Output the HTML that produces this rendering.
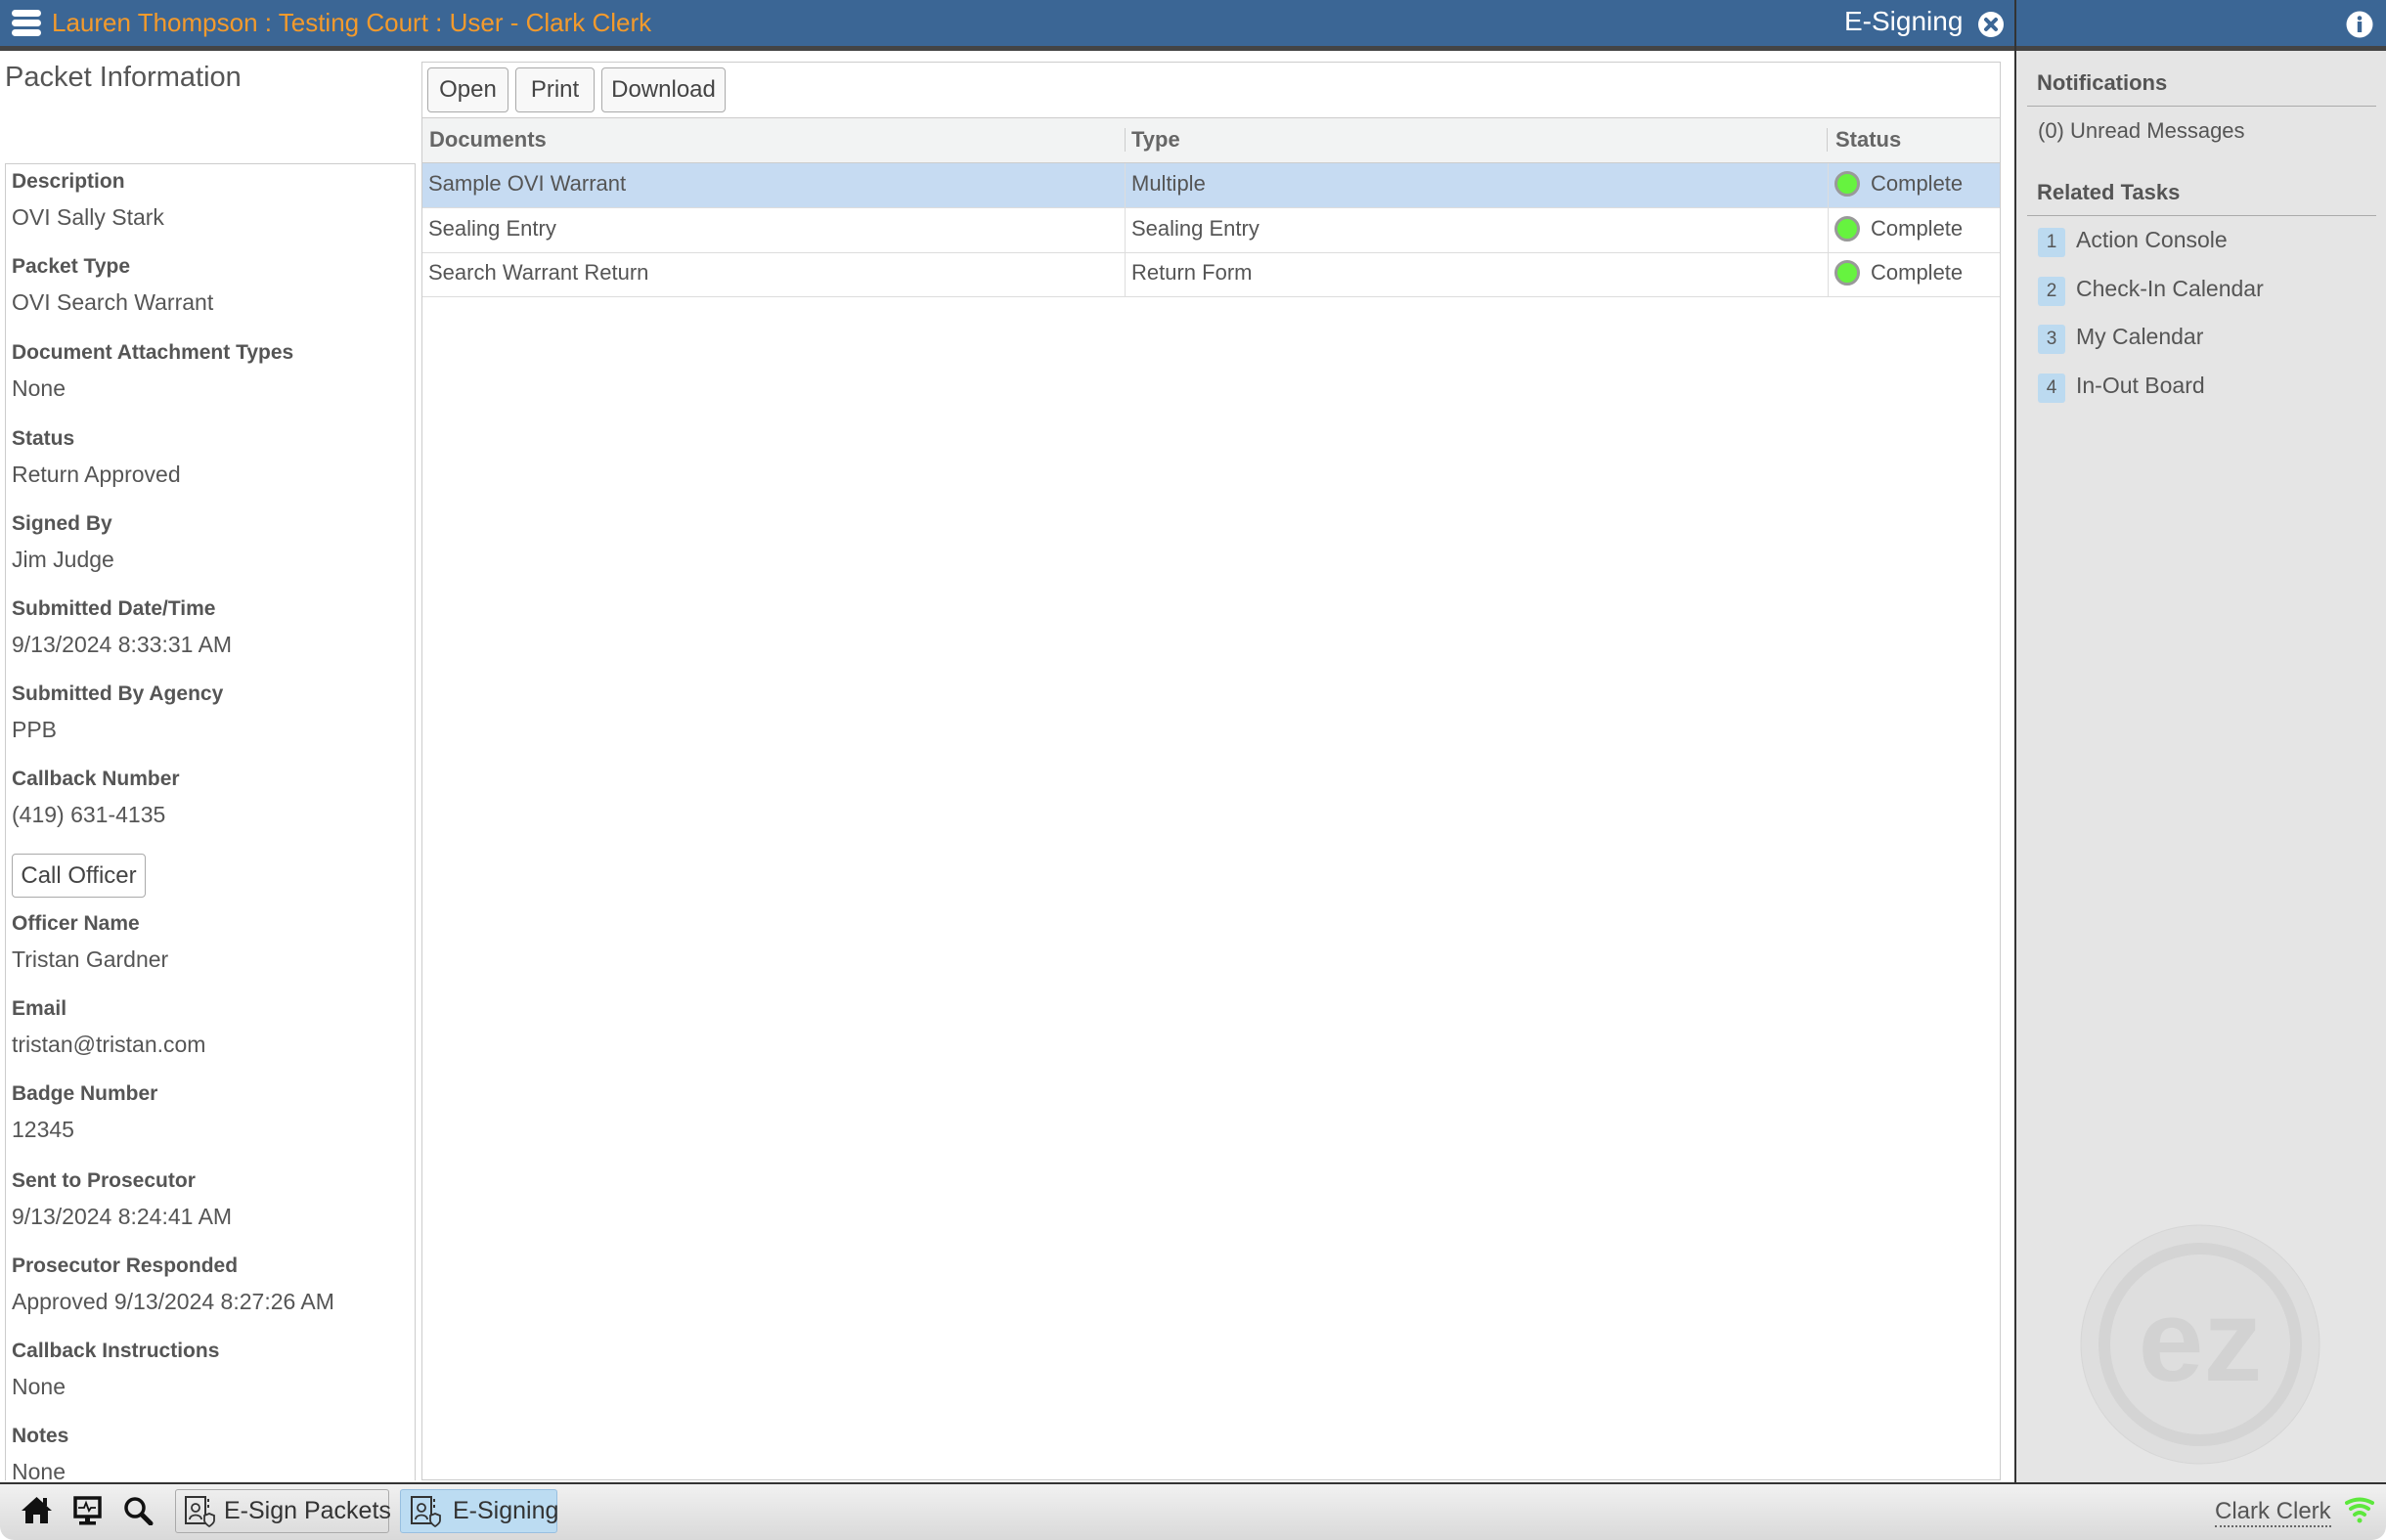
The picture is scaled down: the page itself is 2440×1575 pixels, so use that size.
<!DOCTYPE html>
<html><head><meta charset="utf-8">
<style>
*{box-sizing:border-box;margin:0;padding:0}
body{width:2440px;height:1575px;overflow:hidden;background:#fff;font-family:"Liberation Sans",sans-serif;color:#555;position:relative}
.a{position:absolute;white-space:nowrap}
#top{left:0;top:0;width:2440px;height:47px;background:#3b6695}
#topline{left:0;top:47px;width:2440px;height:5px;background:#444}
.lbl{font-weight:bold;font-size:21px;color:#555;left:12px}
.val{font-size:23px;color:#555;left:12px}
.btn{border:1px solid #aaa;border-radius:4px;background:#f8f8f8;font-size:24px;color:#444;text-align:center}
.row{left:432px;width:1613px;height:46px;border-bottom:1px solid #ddd}
.cell{font-size:22px;color:#555}
.dot{width:26px;height:26px;border-radius:50%;background:#66f33f;border:3px solid #999}
.badge{left:2084px;width:28px;height:30px;background:#bcdaf0;border-radius:3px;font-size:19px;text-align:center;line-height:30px;color:#555}
.task{left:2123px;font-size:23px;color:#555}
</style></head><body>
<div class="a" id="top"></div>
<div class="a" id="topline"></div>
<div class="a" style="left:12px;top:10px;width:30px;height:7px;background:#fff;border-radius:4px"></div>
<div class="a" style="left:12px;top:20px;width:30px;height:7px;background:#fff;border-radius:4px"></div>
<div class="a" style="left:12px;top:30px;width:30px;height:7px;background:#fff;border-radius:4px"></div>
<div class="a" style="left:53px;top:8px;font-size:26px;color:#f39a2c">Lauren Thompson : Testing Court : User - Clark Clerk</div>
<div class="a" style="left:1886px;top:6px;font-size:28px;color:#fff">E-Signing</div>
<svg class="a" style="left:2022px;top:11px" width="28" height="28" viewBox="0 0 28 28"><circle cx="14" cy="14" r="13" fill="#fff"/><path d="M9 9L19 19M19 9L9 19" stroke="#3b6695" stroke-width="4" stroke-linecap="round"/></svg>
<div class="a" style="left:2060px;top:0;width:2px;height:1517px;background:#333"></div>
<svg class="a" style="left:2399px;top:11px" width="28" height="28" viewBox="0 0 28 28"><circle cx="14" cy="14" r="13.5" fill="#fff"/><circle cx="14" cy="7.5" r="2.3" fill="#3b6695"/><rect x="11.8" y="11" width="4.4" height="11" fill="#3b6695"/></svg>

<div class="a" style="left:5px;top:63px;font-size:29px;color:#555">Packet Information</div>
<div class="a" style="left:5px;top:167px;width:420px;height:1347px;border:1px solid #ccc;border-bottom:none"></div>
<div class="a lbl" style="top:174px">Description</div><div class="a val" style="top:209px">OVI Sally Stark</div>
<div class="a lbl" style="top:261px">Packet Type</div><div class="a val" style="top:296px">OVI Search Warrant</div>
<div class="a lbl" style="top:349px">Document Attachment Types</div><div class="a val" style="top:384px">None</div>
<div class="a lbl" style="top:437px">Status</div><div class="a val" style="top:472px">Return Approved</div>
<div class="a lbl" style="top:524px">Signed By</div><div class="a val" style="top:559px">Jim Judge</div>
<div class="a lbl" style="top:611px">Submitted Date/Time</div><div class="a val" style="top:646px">9/13/2024 8:33:31 AM</div>
<div class="a lbl" style="top:698px">Submitted By Agency</div><div class="a val" style="top:733px">PPB</div>
<div class="a lbl" style="top:785px">Callback Number</div><div class="a val" style="top:820px">(419) 631-4135</div>
<div class="a btn" style="left:12px;top:873px;width:137px;height:45px;line-height:43px;background:#fff">Call Officer</div>
<div class="a lbl" style="top:933px">Officer Name</div><div class="a val" style="top:968px">Tristan Gardner</div>
<div class="a lbl" style="top:1020px">Email</div><div class="a val" style="top:1055px">tristan@tristan.com</div>
<div class="a lbl" style="top:1107px">Badge Number</div><div class="a val" style="top:1142px">12345</div>
<div class="a lbl" style="top:1196px">Sent to Prosecutor</div><div class="a val" style="top:1231px">9/13/2024 8:24:41 AM</div>
<div class="a lbl" style="top:1283px">Prosecutor Responded</div><div class="a val" style="top:1318px">Approved 9/13/2024 8:27:26 AM</div>
<div class="a lbl" style="top:1370px">Callback Instructions</div><div class="a val" style="top:1405px">None</div>
<div class="a lbl" style="top:1457px">Notes</div>
<div class="a" style="left:6px;top:1490px;width:418px;height:23px;overflow:hidden"><div class="a val" style="left:6px;top:2px">None</div></div>

<div class="a" style="left:431px;top:63px;width:1615px;height:1451px;border:1px solid #ccc"></div>
<div class="a btn" style="left:437px;top:69px;width:83px;height:46px;line-height:44px">Open</div>
<div class="a btn" style="left:527px;top:69px;width:81px;height:46px;line-height:44px">Print</div>
<div class="a btn" style="left:615px;top:69px;width:127px;height:46px;line-height:44px">Download</div>
<div class="a" style="left:432px;top:120px;width:1613px;height:47px;background:#f2f3f3;border-top:1px solid #ccc;border-bottom:1px solid #ccc"></div>
<div class="a" style="left:439px;top:130px;font-size:22px;font-weight:bold;color:#666">Documents</div>
<div class="a" style="left:1150px;top:131px;width:1px;height:24px;background:#ccc"></div>
<div class="a" style="left:1157px;top:130px;font-size:22px;font-weight:bold;color:#666">Type</div>
<div class="a" style="left:1868px;top:131px;width:1px;height:24px;background:#ccc"></div>
<div class="a" style="left:1877px;top:130px;font-size:22px;font-weight:bold;color:#666">Status</div>

<div class="a row" style="top:167px;background:#c6dbf2"></div>
<div class="a row" style="top:213px"></div>
<div class="a row" style="top:258px"></div>
<div class="a" style="left:1150px;top:167px;width:1px;height:137px;background:#ddd"></div>
<div class="a" style="left:1869px;top:167px;width:1px;height:137px;background:#ddd"></div>
<div class="a cell" style="left:438px;top:175px">Sample OVI Warrant</div>
<div class="a cell" style="left:1157px;top:175px">Multiple</div>
<div class="a dot" style="left:1876px;top:175px"></div><div class="a cell" style="left:1913px;top:175px">Complete</div>
<div class="a cell" style="left:438px;top:221px">Sealing Entry</div>
<div class="a cell" style="left:1157px;top:221px">Sealing Entry</div>
<div class="a dot" style="left:1876px;top:221px"></div><div class="a cell" style="left:1913px;top:221px">Complete</div>
<div class="a cell" style="left:438px;top:266px">Search Warrant Return</div>
<div class="a cell" style="left:1157px;top:266px">Return Form</div>
<div class="a dot" style="left:1876px;top:266px"></div><div class="a cell" style="left:1913px;top:266px">Complete</div>

<div class="a" style="left:2062px;top:52px;width:378px;height:1465px;background:#e5e5e5"></div>
<div class="a" style="left:2083px;top:72px;font-size:22px;font-weight:bold;color:#555">Notifications</div>
<div class="a" style="left:2073px;top:108px;width:357px;height:1px;background:#aaa"></div>
<div class="a" style="left:2084px;top:121px;font-size:22px;color:#555">(0) Unread Messages</div>
<div class="a" style="left:2083px;top:184px;font-size:22px;font-weight:bold;color:#555">Related Tasks</div>
<div class="a" style="left:2073px;top:220px;width:357px;height:1px;background:#aaa"></div>
<div class="a badge" style="top:233px">1</div><div class="a task" style="top:232px">Action Console</div>
<div class="a badge" style="top:283px">2</div><div class="a task" style="top:282px">Check-In Calendar</div>
<div class="a badge" style="top:332px">3</div><div class="a task" style="top:331px">My Calendar</div>
<div class="a badge" style="top:382px">4</div><div class="a task" style="top:381px">In-Out Board</div>
<svg class="a" style="left:2125px;top:1250px" width="250" height="250" viewBox="0 0 250 250">
<circle cx="125" cy="125" r="122" fill="#dedede" stroke="#d6d6d6" stroke-width="1"/>
<circle cx="125" cy="125" r="98" fill="none" stroke="#d4d4d4" stroke-width="12"/>
<text x="125" y="162" text-anchor="middle" font-family="Liberation Sans" font-weight="bold" font-size="120" fill="#d2d2d2">ez</text>
</svg>

<div class="a" style="left:0;top:1516px;width:2440px;height:2px;background:#333"></div>
<div class="a" style="left:0;top:1518px;width:2440px;height:57px;background:linear-gradient(#f1f1f1,#d9d9d9);border-radius:0 0 14px 14px"></div>
<svg class="a" style="left:21px;top:1529px" width="33" height="30" viewBox="0 0 33 30"><path d="M16.5 2L1 16h4v13h8v-9h7v9h8V16h4z" fill="#111"/><rect x="23" y="3" width="4" height="8" fill="#111"/></svg>
<svg class="a" style="left:75px;top:1530px" width="29" height="30" viewBox="0 0 29 30"><rect x="2" y="2" width="25" height="19" fill="none" stroke="#111" stroke-width="3.5"/><path d="M5 12h6l2-5 3 8 2-3h5" fill="none" stroke="#111" stroke-width="1.8"/><rect x="12" y="21" width="5" height="5" fill="#111"/><rect x="6" y="26" width="17" height="3.5" fill="#111"/></svg>
<svg class="a" style="left:126px;top:1530px" width="31" height="30" viewBox="0 0 31 30"><circle cx="12" cy="12" r="9" fill="none" stroke="#111" stroke-width="3.5"/><path d="M19 19l9 9" stroke="#111" stroke-width="5" stroke-linecap="round"/></svg>
<div class="a" style="left:179px;top:1523px;width:219px;height:45px;border:1px solid #aaa;border-radius:3px;background:linear-gradient(#eee,#ddd)"></div>
<svg class="a" style="left:188px;top:1529px" width="34" height="34" viewBox="0 0 34 34"><rect x="2" y="2" width="20" height="27" fill="none" stroke="#333" stroke-width="2"/><circle cx="12" cy="13" r="4" fill="none" stroke="#333" stroke-width="1.8"/><path d="M6 25c0-6 12-6 12 0" fill="none" stroke="#333" stroke-width="1.8"/><path d="M25 4v3M25 10v3" stroke="#333" stroke-width="2"/><path d="M21 21l5-2 5 2v5c0 3-5 6-5 6s-5-3-5-6z" fill="#e6e6e6" stroke="#333" stroke-width="1.8"/></svg>
<div class="a" style="left:229px;top:1531px;font-size:25px;color:#333">E-Sign Packets</div>
<div class="a" style="left:409px;top:1523px;width:161px;height:45px;border:1px solid #98bfe0;border-radius:3px;background:#bcdcf2"></div>
<svg class="a" style="left:419px;top:1529px" width="34" height="34" viewBox="0 0 34 34"><rect x="2" y="2" width="20" height="27" fill="none" stroke="#333" stroke-width="2"/><circle cx="12" cy="13" r="4" fill="none" stroke="#333" stroke-width="1.8"/><path d="M6 25c0-6 12-6 12 0" fill="none" stroke="#333" stroke-width="1.8"/><path d="M25 4v3M25 10v3" stroke="#333" stroke-width="2"/><path d="M21 21l5-2 5 2v5c0 3-5 6-5 6s-5-3-5-6z" fill="#bcdcf2" stroke="#333" stroke-width="1.8"/></svg>
<div class="a" style="left:463px;top:1531px;font-size:25px;color:#333">E-Signing</div>
<div class="a" style="left:2265px;top:1532px;font-size:24px;color:#555;border-bottom:2px dotted #666;line-height:28px">Clark Clerk</div>
<svg class="a" style="left:2398px;top:1531px" width="30" height="28" viewBox="0 0 30 28"><path d="M2 6Q15 -1 28 6M6 12Q15 6 24 12M10 18Q15 14 20 18" fill="none" stroke="#5de83d" stroke-width="4" stroke-linecap="round"/><circle cx="15" cy="24" r="2.5" fill="#5de83d"/></svg>
</body></html>
